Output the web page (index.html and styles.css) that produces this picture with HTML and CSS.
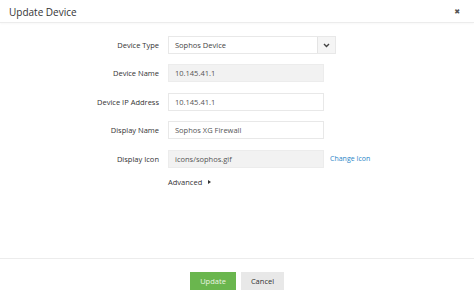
FILE: index.html
```html
<!DOCTYPE html>
<html>
<head>
<meta charset="utf-8">
<link rel="stylesheet" href="styles.css">
</head>
<body>
<div class="dialog">
  <div class="header">
    <span class="title">Update Device</span>
    <span class="close">&#x2716;</span>
  </div>
  <div class="main">
    <div class="form">
      <label class="label">Device Type</label>
      <div class="select"><span class="select-text">Sophos Device</span><span class="select-arrow"><svg width="7" height="5" viewBox="0 0 7 5"><path d="M1 1 L3.5 3.5 L6 1" fill="none" stroke="#444" stroke-width="1.4"/></svg></span></div>
      <span></span>

      <label class="label">Device Name</label>
      <div class="input disabled">10.145.41.1</div>
      <span></span>

      <label class="label">Device IP Address</label>
      <div class="input">10.145.41.1</div>
      <span></span>

      <label class="label">Display Name</label>
      <div class="input">Sophos XG Firewall</div>
      <span></span>

      <label class="label">Display Icon</label>
      <div class="input disabled">icons/sophos.gif</div>
      <a class="link">Change Icon</a>

      <span></span>
      <div class="advanced">Advanced <span class="tri"></span></div>
      <span></span>
    </div>
  </div>
  <div class="footer">
    <button class="btn btn-primary">Update</button>
    <button class="btn btn-default">Cancel</button>
  </div>
</div>
</body>
</html>
```
FILE: styles.css
```css
html, body {
  margin: 0;
  padding: 0;
  background: #ffffff;
}
body {
  font-family: "Open Sans", "DejaVu Sans", sans-serif;
  color: #333;
}
.dialog {
  display: flex;
  flex-direction: column;
  height: 301px;
}
.header {
  height: 22px;
  border-bottom: 1px solid #ececec;
  display: flex;
  align-items: center;
  justify-content: space-between;
  padding: 0 14px 0 9px;
  box-shadow: 0 1px 2px rgba(0,0,0,0.03);
}
.title {
  font-size: 10px;
  color: #333;
  margin-top: 2px;
}
.close {
  font-size: 7px;
  color: #555;
}
.main {
  flex: 1;
  padding-top: 13px;
}
.form {
  display: grid;
  grid-template-columns: 159px 156px auto;
  column-gap: 9px;
  row-gap: 10.4px;
  align-items: center;
}
.label {
  text-align: right;
  font-size: 7.5px;
  color: #333;
}
.input {
  height: 16px;
  border: 1px solid #e8e8e8;
  background: #fff;
  font-size: 7.5px;
  color: #555;
  padding-left: 6px;
  display: flex;
  align-items: center;
  box-sizing: content-box;
}
.input.disabled {
  background: #f2f2f2;
  border-color: #ececec;
}
.select {
  width: 166px;
  height: 16px;
  border: 1px solid #e8e8e8;
  display: flex;
  font-size: 7.5px;
  color: #444;
}
.select-text {
  flex: 1;
  padding-left: 6px;
  display: flex;
  align-items: center;
}
.select-arrow {
  width: 17px;
  border-left: 1px solid #e4e4e4;
  background: #f5f5f5;
  display: flex;
  align-items: center;
  justify-content: center;
}
.link {
  font-size: 7px;
  color: #2a86c7;
  margin-left: -3px;
}
.advanced {
  font-size: 7.5px;
  color: #333;
  display: flex;
  align-items: center;
  margin-top: -1px;
}
.tri {
  display: inline-block;
  width: 0;
  height: 0;
  border-top: 2.5px solid transparent;
  border-bottom: 2.5px solid transparent;
  border-left: 3px solid #333;
  margin-left: 6px;
}
.footer {
  box-sizing: border-box;
  border-top: 1px solid #ececec;
  height: 43px;
  flex-shrink: 0;
  display: flex;
  justify-content: center;
  align-items: flex-start;
  padding-top: 13px;
  gap: 5px;
}
.btn {
  height: 18px;
  border: none;
  font-family: "Open Sans", "DejaVu Sans", sans-serif;
  font-size: 7.5px;
  padding: 0;
}
.btn-primary {
  width: 46px;
  background: #6ab64e;
  color: #eaf5e3;
}
.btn-default {
  width: 43px;
  background: #e8e8e8;
  color: #333;
}
```
